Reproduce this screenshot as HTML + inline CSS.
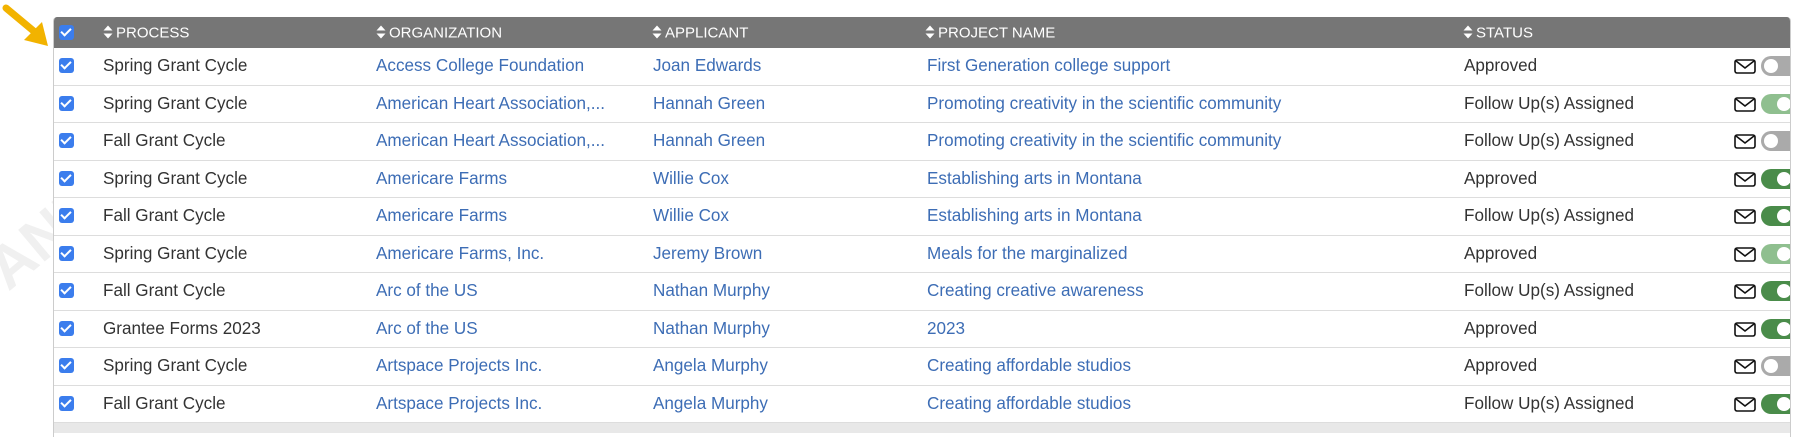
<!DOCTYPE html>
<html><head><style>
body{margin:0;width:1812px;height:428px;background:#fff;position:relative;overflow:hidden;font-family:"Liberation Sans",sans-serif;}
.tbl{position:absolute;left:53px;top:17px;width:1736px;height:420px;border-left:1px solid #ccc;border-right:1px solid #ccc;border-radius:4px 4px 0 0;overflow:hidden;background:#fff}
.hd{height:31px;background:#767676;color:#fff;font-size:15px;position:relative}
.row{height:36.5px;border-bottom:1px solid #ddd;position:relative;font-size:17.1px;color:#333}
.c{position:absolute;top:50%;transform:translateY(-50%);white-space:nowrap}
.a{color:#3d6db5}
.cb{position:absolute;left:5px;top:50%;margin-top:-8px;width:15px;height:15px;background:#3b7ded;border-radius:3px}
.cb:after{content:"";position:absolute;left:4px;top:1px;width:4px;height:8px;border:solid #fff;border-width:0 2.5px 2.5px 0;transform:rotate(45deg)}
.ar{margin-right:3px;vertical-align:-2px}
.env{position:absolute;left:1680px;top:50%;margin-top:-7px}
.tg{position:absolute;left:1707px;top:50%;margin-top:-10px;width:40px;height:20px;border-radius:10px}
.tg:after{content:"";position:absolute;top:3px;width:14px;height:14px;border-radius:50%;background:#fff}
.g{background:#aaa}.g:after{left:3px}
.d{background:#4a8c4a}.d:after{left:16px}
.l{background:#8fbf8f}.l:after{left:16px}
.foot{height:10px;background:#e8e8e8}
.wm{position:absolute;color:#f0f0f0;font-size:60px;font-weight:bold;transform:rotate(-40deg)}
</style></head><body>
<div class="wm" style="left:-20px;top:200px">AND</div>
<div class="wm" style="left:1640px;top:70px">SX</div>
<svg style="position:absolute;left:0;top:0" width="60" height="50"><path d="M6 8 L36 33" stroke="#f2b300" stroke-width="7" stroke-linecap="round"/><path d="M24 40 L48 46 L42 22 Z" fill="#f2b300"/></svg>
<div class="tbl">
<div class="hd"><div class="cb"></div>
<div class="c" style="left:49px"><svg class="ar" width="10" height="15"><path d="M5 1 L9.5 6 H0.5Z M5 14 L9.5 9 H0.5Z" fill="#fff"/></svg>PROCESS</div>
<div class="c" style="left:322px"><svg class="ar" width="10" height="15"><path d="M5 1 L9.5 6 H0.5Z M5 14 L9.5 9 H0.5Z" fill="#fff"/></svg>ORGANIZATION</div>
<div class="c" style="left:598px"><svg class="ar" width="10" height="15"><path d="M5 1 L9.5 6 H0.5Z M5 14 L9.5 9 H0.5Z" fill="#fff"/></svg>APPLICANT</div>
<div class="c" style="left:871px"><svg class="ar" width="10" height="15"><path d="M5 1 L9.5 6 H0.5Z M5 14 L9.5 9 H0.5Z" fill="#fff"/></svg>PROJECT NAME</div>
<div class="c" style="left:1409px"><svg class="ar" width="10" height="15"><path d="M5 1 L9.5 6 H0.5Z M5 14 L9.5 9 H0.5Z" fill="#fff"/></svg>STATUS</div>
</div>
<div id="rows"></div>
<div class="foot"></div>
</div>
<script>
var d=[["Spring Grant Cycle","Access College Foundation","Joan Edwards","First Generation college support","Approved","g"],
["Spring Grant Cycle","American Heart Association,...","Hannah Green","Promoting creativity in the scientific community","Follow Up(s) Assigned","l"],
["Fall Grant Cycle","American Heart Association,...","Hannah Green","Promoting creativity in the scientific community","Follow Up(s) Assigned","g"],
["Spring Grant Cycle","Americare Farms","Willie Cox","Establishing arts in Montana","Approved","d"],
["Fall Grant Cycle","Americare Farms","Willie Cox","Establishing arts in Montana","Follow Up(s) Assigned","d"],
["Spring Grant Cycle","Americare Farms, Inc.","Jeremy Brown","Meals for the marginalized","Approved","l"],
["Fall Grant Cycle","Arc of the US","Nathan Murphy","Creating creative awareness","Follow Up(s) Assigned","d"],
["Grantee Forms 2023","Arc of the US","Nathan Murphy","2023","Approved","d"],
["Spring Grant Cycle","Artspace Projects Inc.","Angela Murphy","Creating affordable studios","Approved","g"],
["Fall Grant Cycle","Artspace Projects Inc.","Angela Murphy","Creating affordable studios","Follow Up(s) Assigned","d"]];
var h="";d.forEach(function(r){h+='<div class="row"><div class="cb"></div><div class="c" style="left:49px">'+r[0]+'</div><div class="c a" style="left:322px">'+r[1]+'</div><div class="c a" style="left:599px">'+r[2]+'</div><div class="c a" style="left:873px">'+r[3]+'</div><div class="c" style="left:1410px">'+r[4]+'</div><svg class="env" width="22" height="15"><rect x="1" y="1" width="20" height="13" rx="2" fill="none" stroke="#111" stroke-width="1.6"/><path d="M2 2 L11 9 L20 2" fill="none" stroke="#111" stroke-width="1.6"/></svg><div class="tg '+r[5]+'"></div></div>';});
document.getElementById("rows").innerHTML=h;
</script>
</body></html>
